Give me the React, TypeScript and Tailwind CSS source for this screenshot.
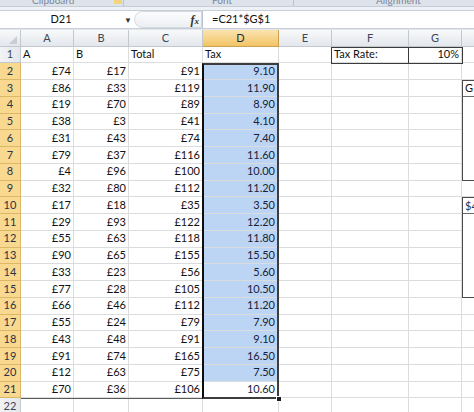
import React from 'react';

type Row = { n: number; a: number; b: number; c: number; d: string };

const rows: Row[] = [
  { n: 2, a: 74, b: 17, c: 91, d: '9.10' },
  { n: 3, a: 86, b: 33, c: 119, d: '11.90' },
  { n: 4, a: 19, b: 70, c: 89, d: '8.90' },
  { n: 5, a: 38, b: 3, c: 41, d: '4.10' },
  { n: 6, a: 31, b: 43, c: 74, d: '7.40' },
  { n: 7, a: 79, b: 37, c: 116, d: '11.60' },
  { n: 8, a: 4, b: 96, c: 100, d: '10.00' },
  { n: 9, a: 32, b: 80, c: 112, d: '11.20' },
  { n: 10, a: 17, b: 18, c: 35, d: '3.50' },
  { n: 11, a: 29, b: 93, c: 122, d: '12.20' },
  { n: 12, a: 55, b: 63, c: 118, d: '11.80' },
  { n: 13, a: 90, b: 65, c: 155, d: '15.50' },
  { n: 14, a: 33, b: 23, c: 56, d: '5.60' },
  { n: 15, a: 77, b: 28, c: 105, d: '10.50' },
  { n: 16, a: 66, b: 46, c: 112, d: '11.20' },
  { n: 17, a: 55, b: 24, c: 79, d: '7.90' },
  { n: 18, a: 43, b: 48, c: 91, d: '9.10' },
  { n: 19, a: 91, b: 74, c: 165, d: '16.50' },
  { n: 20, a: 12, b: 63, c: 75, d: '7.50' },
  { n: 21, a: 70, b: 36, c: 106, d: '10.60' },
];

const cell = 'h-full shrink-0 border-r border-b border-[#dadcdd] flex items-center px-[2px]';
const numCell = cell + ' justify-end';

const ColHead = ({ label, w, active }: { label: string; w: string; active?: boolean }) => (
  <div
    className={`${w} h-full shrink-0 flex items-center justify-center border-r border-b ${
      active
        ? 'bg-gradient-to-b from-[#fbe3b0] to-[#f2c463] border-[#c9a152] text-[#1d2b40]'
        : 'bg-gradient-to-b from-[#f8f9fa] to-[#e3e7ec] border-[#c3c8cf] text-[#3c4757]'
    }`}
  >
    {label}
  </div>
);

const RowHead = ({ n, active }: { n: number; active?: boolean }) => (
  <div
    className={`w-[21px] h-full shrink-0 flex items-center justify-center border-r border-b ${
      active
        ? 'bg-[#f9d88f] border-[#dcb768] text-[#2a3446]'
        : 'bg-gradient-to-r from-[#f1f3f5] to-[#e4e7eb] border-[#c3c8cf] text-[#3c4757]'
    }`}
  >
    {n}
  </div>
);

export default function App() {
  return (
    <div className="w-[474px] h-[412px] overflow-hidden bg-white text-[11px] text-[#111] font-['Lato','Open_Sans',sans-serif]">
      {/* ribbon group labels, mostly cut off */}
      <div className="h-[6px] bg-[#dde3ea] relative overflow-hidden text-[#7b8697] text-[10px]">
        <span className="absolute left-[32px] top-[-7px]">Clipboard</span>
        <span className="absolute left-[114px] top-0 w-[8px] h-[4px] bg-[#f3d47c]" />
        <span className="absolute left-[123px] top-0 w-px h-full bg-[#b9c2cd]" />
        <span className="absolute left-[212px] top-[-7px]">Font</span>
        <span className="absolute left-[293px] top-0 w-px h-full bg-[#b9c2cd]" />
        <span className="absolute left-[376px] top-[-7px]">Alignment</span>
      </div>
      <div className="h-[4px] bg-[#eef1f5] border-t border-[#c7ced8]" />

      {/* formula bar */}
      <div className="h-[19px] flex items-stretch border-y border-[#c7ced8] bg-white">
        <div className="w-[122px] flex items-center justify-center text-[11px] text-[#111]">D21</div>
        <div className="w-[12px] flex items-center justify-center text-[8px] text-[#333]">▼</div>
        <div className="w-[68px] flex items-center justify-end pr-[2px] bg-gradient-to-b from-[#fbfcfd] to-[#eceff3] rounded-l-full border border-[#d3d9e0]">
          <span className="font-['Liberation_Serif',serif] italic font-bold text-[12px] text-[#333] leading-none">
            f<span className="text-[9px]">x</span>
          </span>
        </div>
        <div className="flex-1 flex items-center pl-[9px] border-l border-[#b9c2cd] text-[11px]">=C21*$G$1</div>
      </div>
      <div className="h-px bg-[#e3e7ec]" />

      {/* grid */}
      <div className="relative">
        <div className="h-[16.5px] flex">
          <div className="w-[21px] h-full shrink-0 relative bg-gradient-to-b from-[#f8f9fa] to-[#e3e7ec] border-r border-b border-[#c3c8cf]">
            <span className="absolute right-[3px] bottom-[2px] w-0 h-0 border-l-[8px] border-l-transparent border-b-[8px] border-b-[#c9ced5]" />
          </div>
          <ColHead label="A" w="w-[53px]" />
          <ColHead label="B" w="w-[55px]" />
          <ColHead label="C" w="w-[74px]" />
          <ColHead label="D" w="w-[76px]" active />
          <ColHead label="E" w="w-[53px]" />
          <ColHead label="F" w="w-[77px]" />
          <ColHead label="G" w="w-[53px]" />
          <ColHead label="" w="w-[60px]" />
        </div>

        <div className="relative">
          <div className="h-[16.75px] flex">
            <RowHead n={1} />
            <div className={`${cell} w-[53px]`}>A</div>
            <div className={`${cell} w-[55px]`}>B</div>
            <div className={`${cell} w-[74px]`}>Total</div>
            <div className={`${cell} w-[76px]`}>Tax</div>
            <div className={`${cell} w-[53px]`} />
            <div className={`${cell} w-[77px]`}>Tax Rate:</div>
            <div className={`${numCell} w-[53px]`}>10%</div>
            <div className={`${cell} w-[60px]`} />
          </div>

          {rows.map(r => (
            <div key={r.n} className="h-[16.75px] flex">
              <RowHead n={r.n} active />
              <div className={`${numCell} w-[53px]`}>£{r.a}</div>
              <div className={`${numCell} w-[55px]`}>£{r.b}</div>
              <div className={`${numCell} w-[74px]`}>£{r.c}</div>
              <div className={`${numCell} w-[76px] pr-[3px] text-[#17223a] ${r.n === 21 ? 'bg-white' : 'bg-[#bcd5f5] border-[#c8dcf6]'}`}>
                {r.d}
              </div>
              <div className={`${cell} w-[53px]`} />
              <div className={`${cell} w-[77px]`} />
              <div className={`${cell} w-[53px]`} />
              <div className={`${cell} w-[60px]`} />
            </div>
          ))}

          <div className="h-[16.75px] flex">
            <RowHead n={22} />
            <div className={`${cell} w-[53px]`} />
            <div className={`${cell} w-[55px]`} />
            <div className={`${cell} w-[74px]`} />
            <div className={`${cell} w-[76px]`} />
            <div className={`${cell} w-[53px]`} />
            <div className={`${cell} w-[77px]`} />
            <div className={`${cell} w-[53px]`} />
            <div className={`${cell} w-[60px]`} />
          </div>

          {/* F1:G1 bordered box */}
          <div className="absolute left-[331px] top-0 w-[132px] h-[17px] border border-[#3b3b3b] pointer-events-none">
            <div className="absolute left-[76px] top-0 w-px h-full bg-[#3b3b3b]" />
          </div>

          {/* bottom border under A21:C21 */}
          <div className="absolute left-[21px] top-[351.25px] w-[182px] h-px bg-[#5a5a5a]" />

          {/* selection D2:D21 */}
          <div className="absolute left-[202px] top-[16px] w-[77px] h-[336px] border-2 border-[#3d3d3d] border-l-[#0d0d0d] pointer-events-none" />
          <div className="absolute left-[276px] top-[349px] w-[6px] h-[6px] bg-[#1c1c1c] border border-white" />

          {/* objects lying over the sheet on the right */}
          <div className="absolute left-[462px] top-[33.5px] w-[30px] h-[101px] bg-white border border-[#4a4a4a]">
            <div className="h-[16px] border-b border-[#6a6a6a] pl-[2px] flex items-center">G</div>
          </div>
          <div className="absolute left-[462px] top-[150.75px] w-[30px] h-[101px] bg-white border border-[#4a4a4a]">
            <div className="h-[16px] border-b border-[#6a6a6a] pl-[2px] flex items-center text-[#1f3552]">$4</div>
          </div>
        </div>
      </div>
    </div>
  );
}
